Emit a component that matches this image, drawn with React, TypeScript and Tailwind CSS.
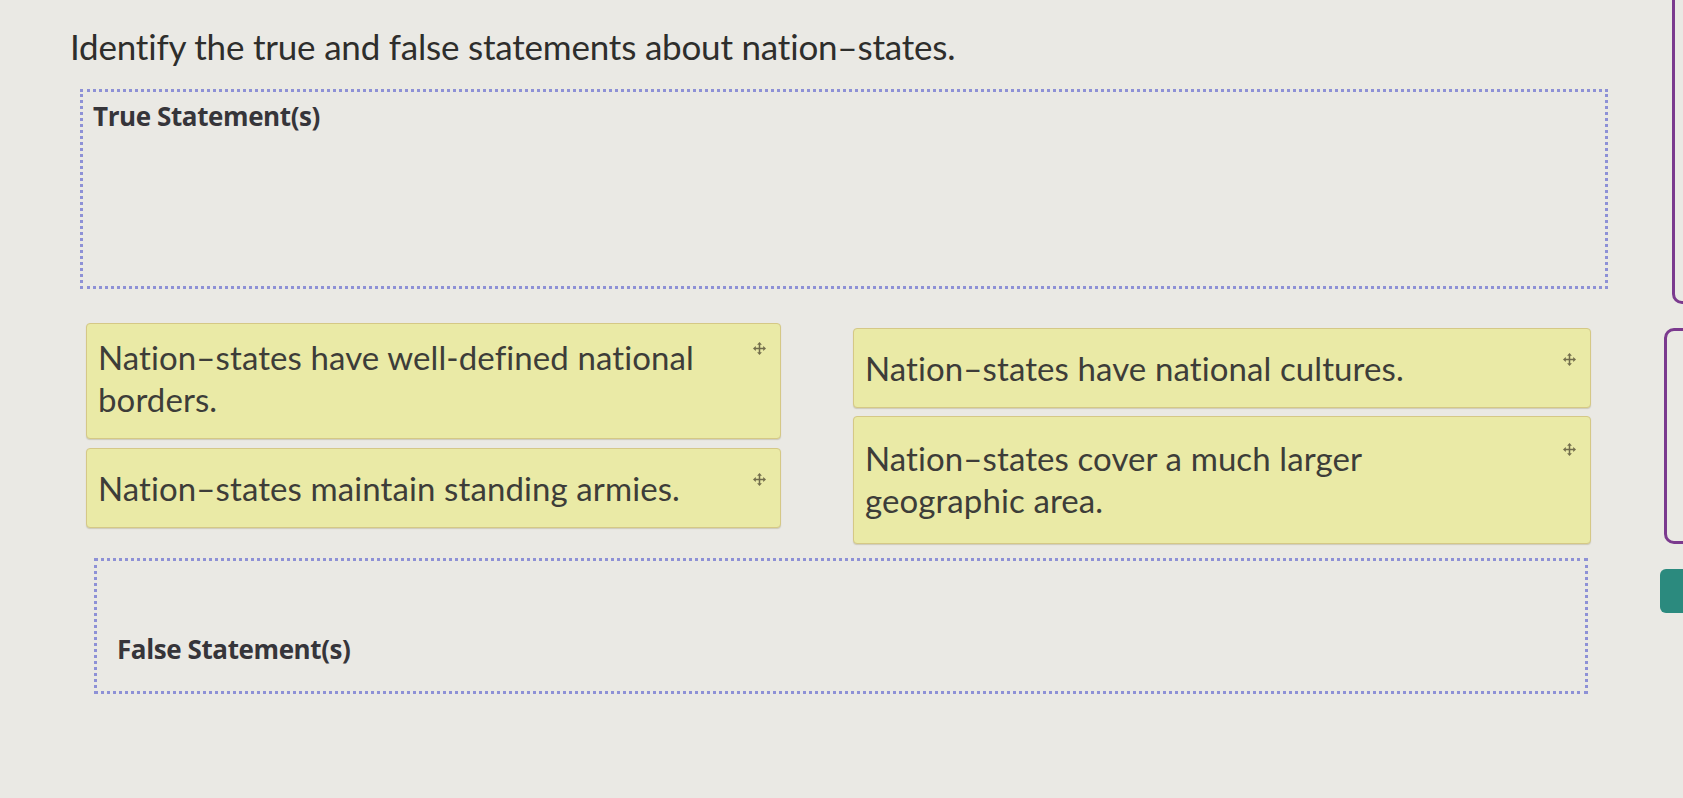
import React from 'react'

function MoveIcon() {
  return (
    <svg width="13" height="13" viewBox="0 0 12 12" className="shrink-0 text-[#716c4b]" fill="currentColor">
      <rect x="5.3" y="2" width="1.4" height="8" />
      <rect x="2" y="5.3" width="8" height="1.4" />
      <path d="M6 0 L8.2 2.6 L3.8 2.6 Z" />
      <path d="M6 12 L8.2 9.4 L3.8 9.4 Z" />
      <path d="M0 6 L2.6 3.8 L2.6 8.2 Z" />
      <path d="M12 6 L9.4 3.8 L9.4 8.2 Z" />
    </svg>
  )
}

function Card({ text, className = '' }: { text: string; className?: string }) {
  return (
    <div
      className={
        'flex items-start justify-between gap-6 rounded-[4px] border border-[#d5c886] bg-[#eaeaa6] pl-[11px] pr-[14px] shadow-[0_1px_1px_rgba(120,110,60,0.25)] ' +
        className
      }
    >
      <p className="max-w-[612px] text-[33px] leading-[42px] tracking-[0.1px] text-[#3d3d39]">{text}</p>
      <div className="pt-[6px]">
        <MoveIcon />
      </div>
    </div>
  )
}

export default function App() {
  return (
    <div className="flex h-[798px] w-full overflow-hidden bg-[#eae9e4] font-['Lato',sans-serif]">
      <main className="w-[1608px] shrink-0 pl-[70px] pt-[24px]">
        <h1 className="text-[35px] leading-[44px] tracking-[-0.2px] text-[#2e2e2c]">
          Identify the true and false statements about nation–states.
        </h1>

        {/* True drop zone */}
        <section className="ml-[10px] mt-[21px] h-[200px] w-[1528px] border-[3px] border-dotted border-[#8e91d6] px-[10px] pt-[7px]">
          <h2 className="font-['Open_Sans',sans-serif] text-[26px] font-bold leading-[34px] tracking-[-0.4px] text-[#36353a]">
            True Statement(s)
          </h2>
        </section>

        {/* Answer cards */}
        <div className="ml-[16px] mt-[34px] grid w-[1505px] grid-cols-[695px_738px] gap-x-[72px]">
          <div className="flex flex-col gap-[9px]">
            <Card text="Nation–states have well-defined national borders." className="pt-[12px] pb-[18px]" />
            <Card text="Nation–states maintain standing armies." className="py-[18px]" />
          </div>
          <div className="flex flex-col gap-[8px] pt-[5px]">
            <Card text="Nation–states have national cultures." className="py-[18px]" />
            <Card text="Nation–states cover a much larger geographic area." className="pt-[20px] pb-[22px]" />
          </div>
        </div>

        {/* False drop zone */}
        <section className="ml-[24px] mt-[14px] flex h-[136px] w-[1494px] items-end border-[3px] border-dotted border-[#8e91d6] px-[20px] pb-[25px]">
          <h2 className="font-['Open_Sans',sans-serif] text-[26px] font-bold leading-[34px] tracking-[-0.4px] text-[#36353a]">
            False Statement(s)
          </h2>
        </section>
      </main>

      {/* Right side panel, mostly cut off */}
      <aside className="ml-[52px] flex w-[60px] shrink-0 flex-col">
        <div className="-mt-[20px] ml-[12px] h-[324px] w-[80px] rounded-[10px] border-[3px] border-[#7b3a8e]" />
        <div className="ml-[4px] mt-[24px] h-[216px] w-[80px] rounded-[10px] border-[3px] border-[#7b3a8e]" />
        <div className="mt-[25px] h-[44px] w-[80px] rounded-[6px] bg-[#2b8a7e]" />
      </aside>
    </div>
  )
}
